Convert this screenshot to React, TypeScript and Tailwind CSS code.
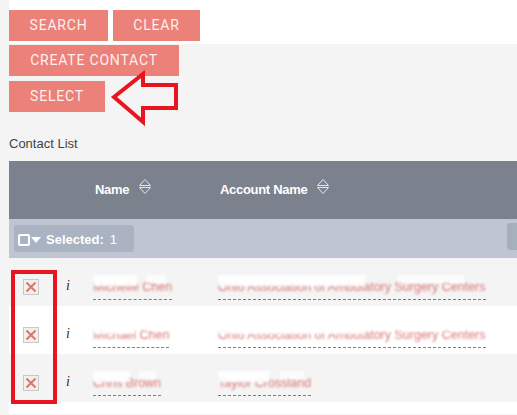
import React from 'react';

const rows = [
  { name: 'Michelle Chen', account: 'Ohio Association of Ambulatory Surgery Centers', bg: 'bg-[#f4f4f4]' },
  { name: 'Michael Chen', account: 'Ohio Association of Ambulatory Surgery Centers', bg: 'bg-white' },
  { name: 'Chris Brown', account: 'Taylor Crossland', bg: 'bg-[#f4f4f4]' },
];

function Btn({ label, w }: { label: string; w: string }) {
  return (
    <button className={`${w} h-[31px] bg-[#ec8179] text-[14px] tracking-[0.8px] text-[#fdf0ee] font-['Roboto',sans-serif]`}>
      {label}
    </button>
  );
}

function SortIcon() {
  return (
    <svg width="14" height="17" viewBox="0 0 14 17" className="inline-block ml-[9px] -mt-[8px]">
      <path d="M1.5 7.5 L7 1.5 L12.5 7.5 Z" fill="none" stroke="#e6e8ec" strokeWidth="1" />
      <path d="M1.5 9.5 L7 15.5 L12.5 9.5 Z" fill="none" stroke="#e6e8ec" strokeWidth="1" />
    </svg>
  );
}

function XBox() {
  return (
    <div className="w-[16px] h-[16px] border border-[#c8c8c8] bg-[#f0f0f0] flex items-center justify-center">
      <svg width="12" height="12" viewBox="0 0 12 12">
        <path d="M1.5 1.5 L10.5 10.5 M10.5 1.5 L1.5 10.5" stroke="#e4726c" strokeWidth="2" />
      </svg>
    </div>
  );
}

function Blurred({ text }: { text: string }) {
  return (
    <span className="relative inline-block pb-[2px]">
      <span className="text-[12.5px] text-[#d77] blur-[1.2px] whitespace-nowrap font-['Liberation_Sans',sans-serif]">{text}</span>
      <span className="absolute left-0 top-[1px] w-[55%] h-[11px] bg-white/90 blur-[1px]" />
      <span className="absolute right-[8%] top-[1px] w-[25%] h-[8px] bg-white/70 blur-[1px]" />
      <span className="absolute left-0 right-0 bottom-0 h-0 border-b border-dashed border-[#e05550]" />
    </span>
  );
}

export default function App() {
  return (
    <div className="w-[517px] h-[415px] overflow-hidden bg-[#f4f4f4] font-['Liberation_Sans',sans-serif] relative">
      <div className="ml-[9px] bg-white pt-[10px] pb-[3px] flex gap-[5px]">
        <Btn label="SEARCH" w="w-[99px]" />
        <Btn label="CLEAR" w="w-[87px]" />
      </div>
      <div className="pl-[9px] pt-[1px] flex flex-col gap-[5px]">
        <Btn label="CREATE CONTACT" w="w-[170px]" />
        <Btn label="SELECT" w="w-[96px]" />
      </div>
      <svg width="70" height="60" viewBox="0 0 70 60" className="absolute left-[110px] top-[70px]">
        <path d="M4 27 L33 4 L33 15 L66 15 L66 38 L33 38 L33 52 Z" fill="none" stroke="#e8141f" strokeWidth="4" strokeLinejoin="miter" />
      </svg>
      <div className="pl-[9px] pt-[22px] text-[13px] text-[#444]">Contact List</div>
      <div className="ml-[9px] mt-[7px]">
        <div className="h-[58px] bg-[#7b828e] flex items-center text-white font-bold text-[13px] tracking-[-0.3px]">
          <div className="w-[86px]" />
          <div className="w-[125px]">Name<SortIcon /></div>
          <div>Account Name<SortIcon /></div>
        </div>
        <div className="h-[39px] bg-[#c0c6d1] flex items-end pb-[6px] pl-[5px] relative">
          <div className="w-[120px] h-[27px] rounded-[3px] bg-[#a9b3c1] flex items-center pl-[4px] pt-[4px] text-white font-bold text-[13px]">
            <span className="w-[12px] h-[12px] border-2 border-white rounded-[2px]" />
            <svg width="10" height="6" viewBox="0 0 10 6" className="ml-[1px]"><path d="M0 0 L10 0 L5 6 Z" fill="#fff" /></svg>
            <span className="ml-[5px]">Selected:</span>
            <span className="ml-[6px] font-normal">1</span>
          </div>
          <div className="absolute right-0 top-[4px] w-[10px] h-[27px] rounded-l-[3px] bg-[#a6afbc]" />
        </div>
        {rows.map((r, i) => (
          <div key={i} className={`h-[48px] ${r.bg} flex items-start pt-[21px]`}>
            <div className="w-[57px] pl-[14px]"><XBox /></div>
            <div className="w-[27px] -mt-[4px] text-[14px] italic font-['Liberation_Serif',serif] text-[#333]">i</div>
            <div className="w-[125px] -mt-[5px]"><Blurred text={r.name} /></div>
            <div className="-mt-[5px]"><Blurred text={r.account} /></div>
          </div>
        ))}
        <div className="h-[12px] bg-white" />
      </div>
      <div className="absolute left-[11px] top-[270px] w-[46px] h-[134px] border-[4px] border-[#e8141f]" />
    </div>
  );
}
